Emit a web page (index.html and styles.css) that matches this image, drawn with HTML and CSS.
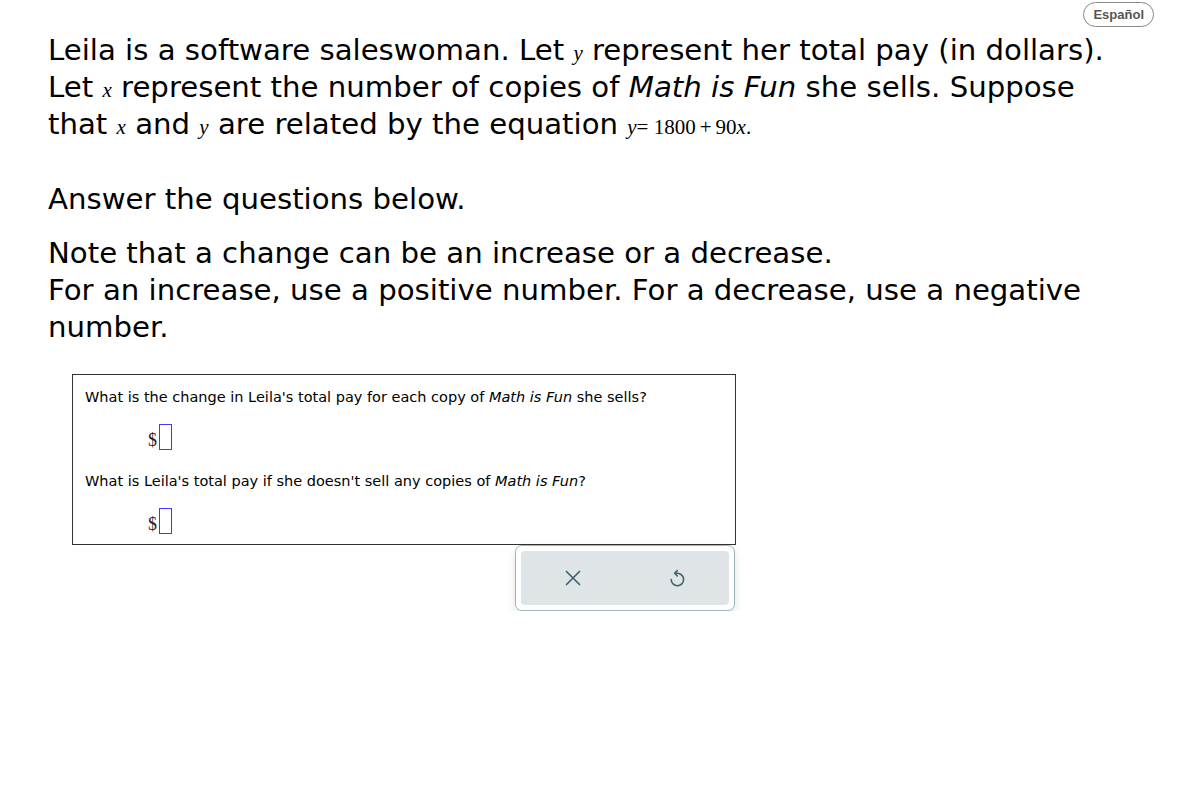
FILE: index.html
```html
<!DOCTYPE html>
<html>
<head>
<meta charset="utf-8">
<link rel="stylesheet" href="styles.css">
</head>
<body>
<div class="page">
  <div class="topbar"><button class="lang">Español</button></div>
  <div class="content">
    <p class="intro">Leila is a software saleswoman. Let <span class="mv">y</span> represent her total pay (in dollars). Let <span class="mv">x</span> represent the number of copies of <i>Math is Fun</i> she sells. Suppose that <span class="mv">x</span> and <span class="mv">y</span> are related by the equation <span class="eq"><i>y</i>= 1800<span class="op">+</span>90<i>x</i>.</span></p>
    <p class="answer">Answer the questions below.</p>
    <p class="note">Note that a change can be an increase or a decrease.<br>For an increase, use a positive number. For a decrease, use a negative number.</p>
    <div class="qbox">
      <div class="q">What is the change in Leila's total pay for each copy of <i>Math is Fun</i> she sells?</div>
      <div class="ans"><span class="dollar">$</span><span class="inp"></span></div>
      <div class="q q2">What is Leila's total pay if she doesn't sell any copies of <i>Math is Fun</i>?</div>
      <div class="ans"><span class="dollar">$</span><span class="inp"></span></div>
    </div>
    <div class="toolrow">
      <div class="tools">
        <div class="toolin">
          <svg class="ic" width="16" height="16" viewBox="0 0 16 16"><path d="M1.5 1.5 L14.5 14.5 M14.5 1.5 L1.5 14.5" stroke="#3d6470" stroke-width="1.7" fill="none" stroke-linecap="round"/></svg>
          <svg class="ic" width="18" height="20" viewBox="0 0 18 20"><path d="M3.2 11.5 A6.2 6.2 0 1 0 9.4 5.3 L7 5.3" stroke="#3d6470" stroke-width="1.6" fill="none" stroke-linecap="round" stroke-linejoin="round"/><path d="M9.3 2.6 L6.6 5.3 L9.3 8" stroke="#3d6470" stroke-width="1.6" fill="none" stroke-linecap="round" stroke-linejoin="round"/></svg>
        </div>
      </div>
    </div>
  </div>
</div>
</body>
</html>
```
FILE: styles.css
```css
html, body { margin: 0; padding: 0; background: #fff; }
body { font-family: "DejaVu Sans", Verdana, sans-serif; color: #000; }
.page { width: 1179px; }
.topbar { display: flex; justify-content: flex-end; padding: 2px 25px 0 0; height: 24px; }
.lang {
  font-family: "Liberation Sans", Arial, sans-serif; font-weight: bold; font-size: 13px; color: #555;
  background: #fff; border: 1px solid #888; border-radius: 13px; height: 25px; padding: 0 9px; line-height: 22px;
}
.content { padding: 0 0 0 48px; }
.intro { font-size: 29.2px; line-height: 37px; margin: 6px 0 0 0; width: 1080px; }
.mv { font-family: "Liberation Serif", "Times New Roman", serif; font-style: italic; font-size: 21px; line-height: 1; }
.eq { font-family: "Liberation Serif", "Times New Roman", serif; font-size: 21px; line-height: 1; }
.op { margin: 0 4px; }
.answer { font-size: 29.2px; line-height: 37px; margin: 38px 0 0 0; }
.note { font-size: 29.2px; line-height: 37px; margin: 17px 0 0 0; width: 1080px; }
.qbox { margin: 28px 0 0 24px; width: 664px; height: 171px; border: 1px solid #333; padding: 12px 0 0 12px; box-sizing: border-box; }
.q { font-size: 14.5px; line-height: 20px; }
.q2 { margin-top: 21px; }
.ans { display: flex; align-items: flex-end; padding: 17px 0 0 63px; }
.dollar { font-family: "Liberation Serif", serif; font-size: 18px; line-height: 20px; margin-right: 2px; color: #222; }
.inp { display: inline-block; width: 11px; height: 24px; border: 1px solid #3b3bff; }
.toolrow { display: flex; margin: 0 0 0 467px; }
.tools {
  width: 220px; height: 66px; box-sizing: border-box; border: 1px solid #9fb5be; border-radius: 7px; background: #fff;
  padding: 5px; box-shadow: 0 4px 8px rgba(0,0,0,0.12);
}
.toolin { height: 100%; background: #dfe5e7; border-radius: 4px; display: flex; justify-content: space-around; align-items: center; }
.ic { display: block; }
```
